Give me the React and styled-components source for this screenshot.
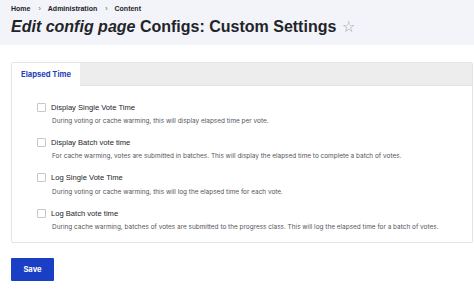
import React from 'react';
import styled, { createGlobalStyle } from 'styled-components';

const Global = createGlobalStyle`
    body {
        margin: 0;
        background: #ffffff;
        font-family: Inter, "Liberation Sans", sans-serif;
        color: #232429;
    }
`

const Header = styled.div`
    background: #f3f4f9;
    padding: 4px 11px 9px 11px;
    height: 32px;
`
const Crumbs = styled.div`
    display: flex;
    align-items: center;
    font-family: "Liberation Sans", Arial, sans-serif;
    font-size: 7px;
    font-weight: 700;
    color: #232429;
    height: 9px;
`
const Sep = styled.span`
    margin: 0 7px 0 8px;
    font-weight: 400;
    font-size: 7px;
    color: #545560;
`
const Title = styled.h1`
    margin: 3px 0 0 0;
    font-family: "Liberation Sans", Arial, sans-serif;
    font-size: 16px;
    font-weight: 700;
    line-height: 22px;
    white-space: nowrap;
    transform: scaleY(1.08);
    transform-origin: left center;
    em { font-style: italic; }
`
const Star = styled.span`
    font-weight: 400;
    color: #a0a0a6;
    font-size: 15px;
    margin-left: 6px;
`
const Main = styled.div`
    padding: 17px 1px 0 11px;
`
const TabBox = styled.div`
    border: 1px solid #e4e4e6;
    border-radius: 2px;
`
const TabBar = styled.div`
    display: flex;
    background: #ededed;
    border-bottom: 1px solid #e2e2e4;
    height: 22px;
`
const Tab = styled.div`
    background: #ffffff;
    color: #1f41b8;
    font-size: 7.6px;
    font-weight: 700;
    width: 68px;
    display: flex;
    align-items: center;
    justify-content: center;
    margin-bottom: -1px;
`
const Pane = styled.div`
    padding: 16px 0 11px 25px;
    display: flex;
    flex-direction: column;
    gap: 12.4px;
`
const Item = styled.div`
    display: flex;
    flex-direction: column;
`
const Row = styled.label`
    display: flex;
    align-items: center;
    gap: 5px;
    font-family: "Liberation Sans", Arial, sans-serif;
    font-size: 7.6px;
    color: #232429;
    height: 10px;
`
const Box = styled.span`
    width: 9px;
    height: 9px;
    border: 1px solid #c6c6cb;
    border-radius: 1px;
    background: #fff;
    box-sizing: border-box;
`
const Desc = styled.div`
    font-size: 6.45px;
    color: #55565b;
    margin: 5px 0 0 15px;
    white-space: nowrap;
`
const Save = styled.button`
    margin: 15px 0 0 11px;
    width: 43px;
    height: 23px;
    border: none;
    border-radius: 1px;
    background: #1b3fc4;
    color: #ffffff;
    font-family: Inter, "Liberation Sans", sans-serif;
    font-size: 7.6px;
    font-weight: 700;
    padding: 0;
`

const items = [
    ['Display Single Vote Time', 'During voting or cache warming, this will display elapsed time per vote.'],
    ['Display Batch vote time', 'For cache warming, votes are submitted in batches. This will display the elapsed time to complete a batch of votes.'],
    ['Log Single Vote Time', 'During voting or cache warming, this will log the elapsed time for each vote.'],
    ['Log Batch vote time', 'During cache warming, batches of votes are submitted to the progress class. This will log the elapsed time for a batch of votes.'],
];

export default function App() {
    return (
        <>
            <Global />
            <Header>
                <Crumbs>
                    <span>Home</span><Sep>›</Sep>
                    <span>Administration</span><Sep>›</Sep>
                    <span>Content</span>
                </Crumbs>
                <Title><em>Edit config page</em> Configs: Custom Settings<Star>☆</Star></Title>
            </Header>
            <Main>
                <TabBox>
                    <TabBar>
                        <Tab>Elapsed Time</Tab>
                    </TabBar>
                    <Pane>
                        {items.map((it, i) => (
                            <Item key={i}>
                                <Row><Box />{it[0]}</Row>
                                <Desc>{it[1]}</Desc>
                            </Item>
                        ))}
                    </Pane>
                </TabBox>
            </Main>
            <Save>Save</Save>
        </>
    );
}
